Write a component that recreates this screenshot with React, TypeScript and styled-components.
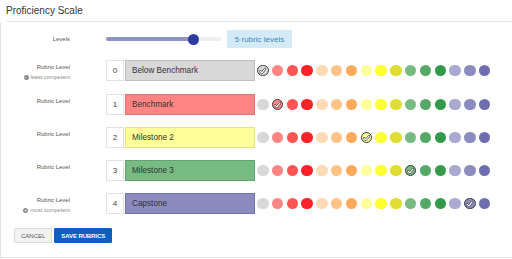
import React from "react";
import styled, {createGlobalStyle} from 'styled-components'

const GlobalStyle = createGlobalStyle`
  html, body {
    margin: 0;
    padding: 0;
    background: white;
  }
  body {
    font-family: "Liberation Sans", Arial, sans-serif;
    color: #333;
  }
`

const palette = [
    '#d8d8d8', '#ff8585', '#ff5454', '#ff2329',
    '#ffdab5', '#ffc387', '#ffaa5a',
    '#ffff99', '#ffff33', '#dfdc32',
    '#77bb83', '#55a866', '#339a4c',
    '#a9a9d1', '#8b8bc0', '#6e6eae',
]

interface Level {
    num: number
    name: string
    fill: string
    border: string
    selected: number
    note?: 'least' | 'most'
}

const levels: Level[] = [
    {num: 0, name: 'Below Benchmark', fill: '#d8d8d8', border: '#bdbdbd', selected: 0, note: 'least'},
    {num: 1, name: 'Benchmark', fill: '#ff8585', border: '#e57272', selected: 1},
    {num: 2, name: 'Milestone 2', fill: '#ffff99', border: '#e4e482', selected: 7},
    {num: 3, name: 'Milestone 3', fill: '#77bb83', border: '#62a46f', selected: 10},
    {num: 4, name: 'Capstone', fill: '#8b8bc0', border: '#7272aa', selected: 14, note: 'most'},
]

const Page = styled.div`
  width: 512px;
  height: 259px;
  display: flex;
  flex-direction: column;
  overflow: hidden;
`

const Header = styled.div`
  margin-left: 6px;
  height: 21px;
  border-bottom: 1px solid #e8e8e8;
  font-size: 10px;
  line-height: 21px;
  color: #333;
`

const Body = styled.div`
  border-left: 1px solid #e2e2e2;
  border-bottom: 1px solid #e2e2e2;
  height: 235px;
  display: flex;
  flex-direction: column;
`

const LevelsRow = styled.div`
  margin-top: 8px;
  height: 18px;
  display: flex;
  align-items: center;
`

const SideLabel = styled.div`
  width: 69px;
  flex-shrink: 0;
  text-align: right;
  font-size: 6px;
  color: #555;
`

const Slider = styled.div`
  margin-left: 36px;
  width: 115px;
  height: 4px;
  border-radius: 2px;
  background: #eeeeee;
  position: relative;
`

const SliderFill = styled.div`
  height: 100%;
  border-radius: 2px;
  background: #8e93c9;
`

const SliderThumb = styled.div`
  position: absolute;
  top: 50%;
  width: 11px;
  height: 11px;
  margin: -5.5px 0 0 -5.5px;
  border-radius: 50%;
  background: #2d3ba0;
`

const Badge = styled.div`
  margin-left: 6px;
  width: 65px;
  height: 18px;
  background: #d4eaf6;
  color: #3b87b8;
  font-size: 8px;
  display: grid;
  place-content: center;
`

const Rows = styled.div`
  margin-top: 12px;
  display: flex;
  flex-direction: column;
  gap: 12px;
`

const Row = styled.div`
  display: flex;
  align-items: flex-start;
`

const LabelCol = styled.div`
  width: 69px;
  flex-shrink: 0;
  padding-top: 3px;
  display: flex;
  flex-direction: column;
  align-items: flex-end;
`

const LabelText = styled.div`
  font-size: 6px;
  line-height: 9px;
  color: #555;
`

const Note = styled.div`
  margin-top: 1px;
  font-size: 5.6px;
  line-height: 9px;
  color: #8a8a8a;
  display: flex;
  align-items: center;
  gap: 2px;
`

const NoteIcon = styled.span`
  width: 5px;
  height: 5px;
  border-radius: 50%;
  background: #8a8a8a;
  display: grid;
  place-content: center;
  color: white;
  font-size: 5px;
  line-height: 5px;
`

const NumBox = styled.div`
  margin-left: 36px;
  width: 16px;
  height: 19px;
  border: 1px solid #e2e2e2;
  font-size: 8px;
  color: #444;
  display: grid;
  place-content: center;
`

const NameBox = styled.div<{ $fill: string, $border: string }>`
  margin-left: 1px;
  width: 122px;
  height: 19px;
  padding-left: 6px;
  background: ${p => p.$fill};
  border: 1px solid ${p => p.$border};
  font-size: 8.2px;
  color: #333;
  display: flex;
  align-items: center;
`

const Swatches = styled.div`
  margin-left: 2px;
  height: 21px;
  display: flex;
  align-items: center;
  gap: 3.3px;
`

const Swatch = styled.span<{ $color: string, $selected: boolean }>`
  box-sizing: border-box;
  width: 11.5px;
  height: 11.5px;
  border-radius: 50%;
  background: ${p => p.$color};
  border: ${p => p.$selected ? '1px solid #3a3a3a' : 'none'};
  display: grid;
  place-content: center;
`

const Buttons = styled.div`
  margin: 13px 0 0 13px;
  display: flex;
  gap: 2px;
`

const Button = styled.button<{ $primary?: boolean }>`
  height: 15px;
  padding: 0 6px;
  font-family: "Liberation Sans", Arial, sans-serif;
  font-size: 6px;
  font-weight: ${p => p.$primary ? 700 : 400};
  letter-spacing: ${p => p.$primary ? '-0.1px' : '0'};
  color: ${p => p.$primary ? 'white' : '#555'};
  background: ${p => p.$primary ? '#0b5fc1' : '#f2f2f2'};
  border: 1px solid ${p => p.$primary ? '#0b5fc1' : '#dcdcdc'};
  border-radius: 1px;
  cursor: pointer;
`

// white tick with a dark edge so it reads on pale swatches too
const Check = () => (
    <svg width="7" height="6" viewBox="0 0 7 6">
        <path d="M1 3.2 L2.8 4.8 L6 1.2" fill="none" stroke="#3a3a3a" strokeWidth="2.3" strokeLinecap="round" strokeLinejoin="round"/>
        <path d="M1 3.2 L2.8 4.8 L6 1.2" fill="none" stroke="white" strokeWidth="1.2" strokeLinecap="round" strokeLinejoin="round"/>
    </svg>
)

const levelCount = 5

export default function App() {
    const pct = 0.76
    return <Page>
        <GlobalStyle/>
        <Header>Proficiency Scale</Header>
        <Body>
            <LevelsRow>
                <SideLabel>Levels</SideLabel>
                <Slider>
                    <SliderFill style={{width: `${pct * 100}%`}}/>
                    <SliderThumb style={{left: `${pct * 100}%`}}/>
                </Slider>
                <Badge>{levelCount} rubric levels</Badge>
            </LevelsRow>
            <Rows>
                {levels.map(l => (
                    <Row key={l.num}>
                        <LabelCol>
                            <LabelText>Rubric Level</LabelText>
                            {l.note && <Note>
                                <NoteIcon>{l.note === 'least' ? '−' : '+'}</NoteIcon>
                                {l.note === 'least' ? 'least competent' : 'most competent'}
                            </Note>}
                        </LabelCol>
                        <NumBox>{l.num}</NumBox>
                        <NameBox $fill={l.fill} $border={l.border}>{l.name}</NameBox>
                        <Swatches>
                            {palette.map((c, i) => (
                                <Swatch key={i} $color={c} $selected={i === l.selected}>
                                    {i === l.selected && <Check/>}
                                </Swatch>
                            ))}
                        </Swatches>
                    </Row>
                ))}
            </Rows>
            <Buttons>
                <Button>CANCEL</Button>
                <Button $primary>SAVE RUBRICS</Button>
            </Buttons>
        </Body>
    </Page>
}
